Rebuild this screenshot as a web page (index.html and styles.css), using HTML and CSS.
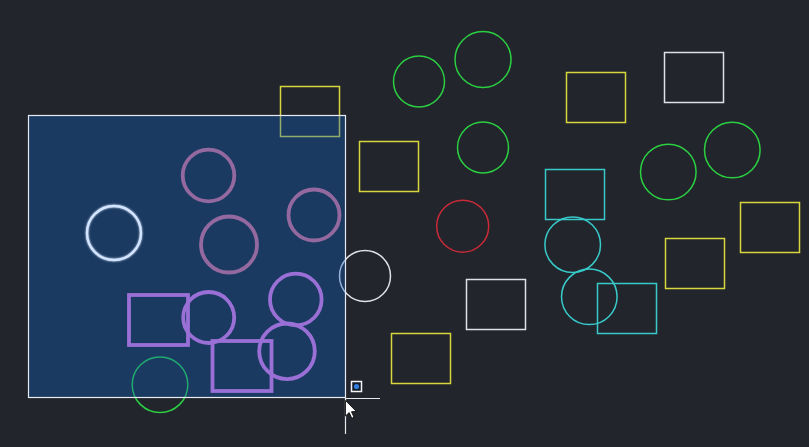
FILE: index.html
```html
<!DOCTYPE html>
<html lang="en">
<head>
<meta charset="utf-8">
<title>Canvas selection</title>
<link rel="stylesheet" href="styles.css">
</head>
<body>
<main class="canvas">
<svg class="board" width="809" height="447" viewBox="0 0 809 447" xmlns="http://www.w3.org/2000/svg">
  <defs>
    <filter id="glowBlue" x="-30%" y="-30%" width="160%" height="160%">
      <feGaussianBlur in="SourceGraphic" stdDeviation="1.2" result="b"/>
      <feMerge><feMergeNode in="b"/><feMergeNode in="SourceGraphic"/></feMerge>
    </filter>
    <filter id="soft" x="-20%" y="-20%" width="140%" height="140%">
      <feGaussianBlur in="SourceGraphic" stdDeviation="0.6"/>
    </filter>
  </defs>

  <!-- unselected shapes -->
  <g class="shape yellow">
    <rect x="280.5" y="86.5" width="59" height="50"/>
    <rect x="359.5" y="141.5" width="59" height="50"/>
    <rect x="566.5" y="72.5" width="59" height="50"/>
    <rect x="740.5" y="202.5" width="59" height="50"/>
    <rect x="665.5" y="238.5" width="59" height="50"/>
    <rect x="391.5" y="333.5" width="59" height="50"/>
  </g>
  <g class="shape white">
    <rect x="664.5" y="52.5" width="59" height="50"/>
    <rect x="466.5" y="279.5" width="59" height="50"/>
    <circle cx="365" cy="276" r="25.5"/>
  </g>
  <g class="shape green">
    <circle cx="419" cy="81.5" r="25.5"/>
    <circle cx="483" cy="59.5" r="28"/>
    <circle cx="483" cy="147.5" r="25.5"/>
    <circle cx="668.3" cy="172" r="27.8"/>
    <circle cx="732.3" cy="150" r="27.8"/>
    <circle cx="160" cy="384.7" r="27.8"/>
  </g>
  <g class="shape red">
    <circle cx="462.7" cy="226.2" r="26"/>
  </g>
  <g class="shape cyan">
    <rect x="545.5" y="169.5" width="59" height="50"/>
    <rect x="597.5" y="283.5" width="59" height="50"/>
    <circle cx="572.7" cy="244.7" r="27.8"/>
    <circle cx="589.3" cy="296.8" r="27.8"/>
  </g>

  <!-- selection marquee -->
  <rect class="marquee" x="28.5" y="115.5" width="317" height="282"/>

  <!-- highlighted shapes -->
  <g class="hl mauve" filter="url(#soft)">
    <circle cx="208.5" cy="175.5" r="25.8"/>
    <circle cx="229" cy="244.5" r="28"/>
    <circle cx="314" cy="215" r="25.5"/>
  </g>
  <g class="hl violet" filter="url(#soft)">
    <rect x="129" y="295" width="59" height="50"/>
    <rect x="212.5" y="341" width="59" height="50"/>
    <circle cx="208.7" cy="317.5" r="25.5"/>
    <circle cx="295.8" cy="299.5" r="25.8"/>
    <circle cx="287" cy="351.3" r="27.8"/>
  </g>
  <g class="hl focus" filter="url(#glowBlue)">
    <circle cx="114" cy="233" r="27"/>
  </g>

  <!-- crosshair and cursor -->
  <line class="cross" x1="345.5" y1="398.5" x2="380" y2="398.5"/>
  <line class="cross" x1="345.5" y1="398" x2="345.5" y2="434"/>
  <rect class="snap" x="351.5" y="381.5" width="10" height="10"/>
  <circle class="snapdot" cx="356.5" cy="386.5" r="2.6"/>
  <path class="cursor" d="M345.5 400.5 L345.5 416 L349.2 412.6 L351.8 418.3 L354 417.3 L351.5 411.7 L356.3 411.4 Z"/>
</svg>
</main>
</body>
</html>
```

FILE: styles.css
```css
html, body {
  margin: 0;
  padding: 0;
  background: #22252b;
  overflow: hidden;
}

.canvas {
  width: 809px;
  height: 447px;
}

.board {
  display: block;
}

.shape {
  fill: none;
  stroke-width: 1.5;
}

.yellow { stroke: #d8d63e; }
.white  { stroke: #e0e1e6; }
.green  { stroke: #2bcf42; }
.red    { stroke: #c82a38; }
.cyan   { stroke: #38caca; }

.marquee {
  fill: rgb(14, 97, 198);
  fill-opacity: 0.35;
  stroke: #e8ecf2;
  stroke-width: 1.2;
}

.hl {
  fill: none;
}

.mauve {
  stroke: #94699f;
  stroke-width: 3.8;
}

.violet {
  stroke: #9a70d6;
  stroke-width: 3.8;
}

.focus {
  stroke: #d2e4ff;
  stroke-width: 2.4;
}

.cross {
  stroke: #e6e8ec;
  stroke-width: 1.2;
}

.snap {
  fill: #141c28;
  stroke: #f2f4f8;
  stroke-width: 1.5;
}

.snapdot {
  fill: #2f7ee0;
}

.cursor {
  fill: #ffffff;
  stroke: #111111;
  stroke-width: 0.9;
  stroke-linejoin: round;
}
```
